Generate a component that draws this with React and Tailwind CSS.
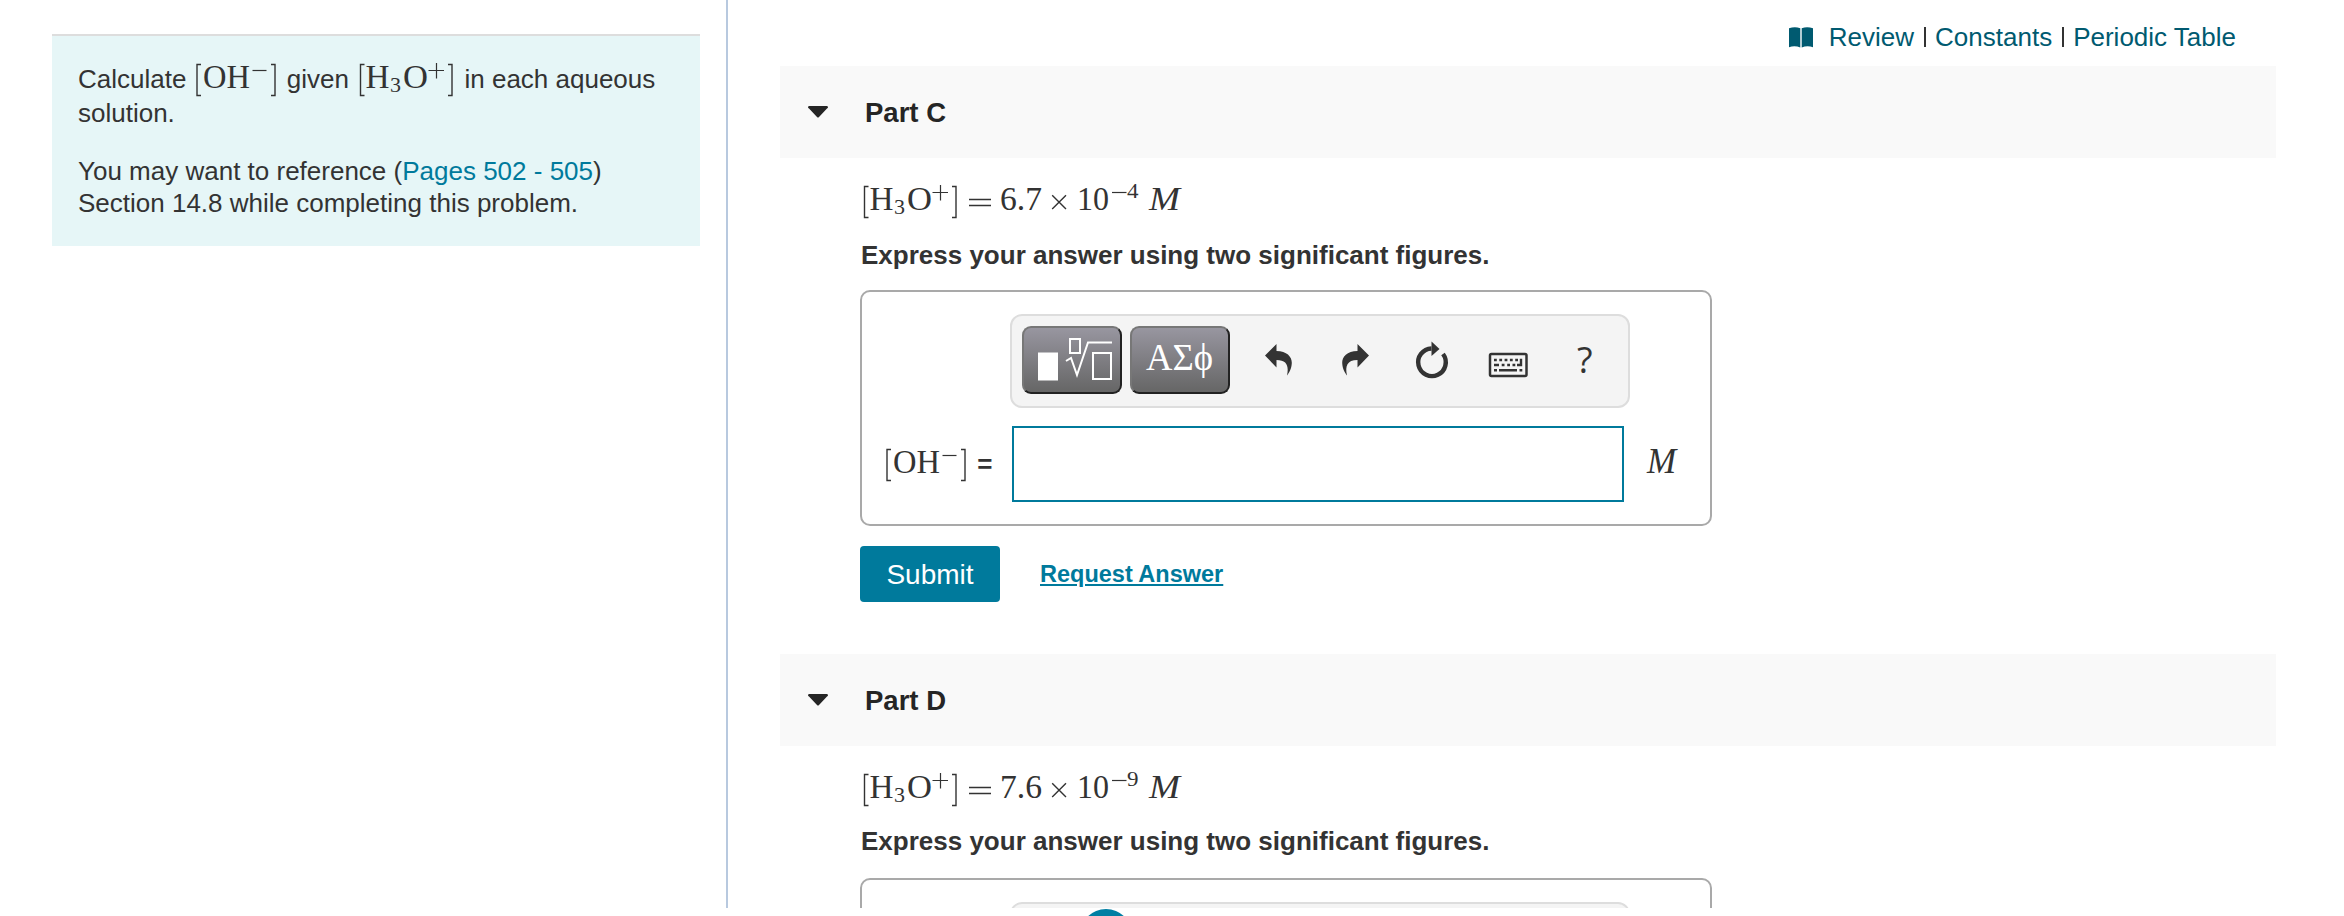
const SANS = "font-['Liberation_Sans',Arial,sans-serif]"
const MATH = "font-['Liberation_Serif','Times_New_Roman',serif]"

function Txt({ x, y, w, size, children, cls = '' }) {
  return (
    <text x={x} y={y} textLength={w} fontSize={size} lengthAdjust="spacingAndGlyphs" fill="currentColor" className={`${MATH} ${cls}`}>
      {children}
    </text>
  )
}

// [OH-]
function Hydroxide() {
  return (
    <svg className="mr-1 inline-block h-[37px] w-[82px] overflow-visible align-[-9px]" viewBox="0 0 82 37">
      <path d="M7 4.500H3V35.500H7M77 4.500h4V35.500h-4" fill="none" stroke="currentColor" strokeWidth="1.4" />
      <Txt x={9} y={28} w={47} size={34}>OH</Txt>
      <path d="M58.500 10.500h14" stroke="currentColor" strokeWidth="1.2" />
    </svg>
  )
}

// [H3O+]
function Hydronium() {
  return (
    <svg className="mx-0.5 inline-block h-[37px] w-[97px] overflow-visible align-[-9px]" viewBox="0 0 97 37">
      <path d="M6.500 4.500H2.500V35.500H6.500M90 4.500h4V35.500h-4" fill="none" stroke="currentColor" strokeWidth="1.4" />
      <Txt x={7.500} y={28} w={24} size={34}>H</Txt>
      <Txt x={32} y={31.500} w={11} size={22}>3</Txt>
      <Txt x={45} y={28} w={25} size={34}>O</Txt>
      <path d="M70.500 10.500h15.500M78.500 3v15.500" stroke="currentColor" strokeWidth="1.2" />
    </svg>
  )
}

function Equation({ value, exponent }) {
  return (
    <div className="flex h-10 items-start">
      <Hydronium />
      <svg className="-ml-0.5 h-10 w-[230px] overflow-visible" viewBox="0 0 230 40">
        <path d="M10 17.500h22M10 23.500h22M93.200 13.200l13.800 13.800M107 13.200l-13.800 13.800" stroke="currentColor" strokeWidth="1.4" />
        <Txt x={41} y={28} w={42} size={33}>{value}</Txt>
        <Txt x={118} y={28} w={32} size={33}>10</Txt>
        <path d="M153 10.500h14.500" stroke="currentColor" strokeWidth="1.2" />
        <Txt x={168} y={16} w={11.500} size={22}>{exponent}</Txt>
        <Txt x={190} y={28} w={31} size={34} cls="italic">M</Txt>
      </svg>
    </div>
  )
}

function Part({ name, value, exponent, children }) {
  return (
    <section>
      <div className="flex h-[92px] items-center bg-[#f9f9f9] pl-7">
        <svg className="mr-[37px] h-3 w-5" viewBox="0 0 20 12">
          <path d="M1 0H19Q21 1 19 2.500L11 11Q10 12 9 11L1 2.500Q-1 1 1 0Z" fill="#252525" />
        </svg>
        <h2 className="pt-px text-[27.5px] font-bold text-[#252525]">{name}</h2>
      </div>
      <div className="pl-20">
        <div className="pt-6"><Equation value={value} exponent={exponent} /></div>
        {children}
      </div>
    </section>
  )
}

function ToolButton({ children }) {
  return (
    <button className="flex h-[68px] w-[100px] items-center justify-center rounded-[9px] border-2 border-t-[#777] border-r-[#222] border-b-[#222] border-l-[#777] bg-linear-to-b from-[#9896a0] to-[#666] text-white">
      {children}
    </button>
  )
}

function Toolbar() {
  return (
    <div className="flex h-[94px] w-[620px] rounded-xl border-2 border-[#ddd] bg-[#f4f4f4] pt-2.5 pl-2.5 text-[#333]">
      <div className="flex gap-2">
        <ToolButton>
          <svg className="h-16 w-24" viewBox="0 0 96 64">
            <path d="M14 24.500h20v28H14z" fill="#fff" />
            <path d="M46 11h10v14H46zM69 25h18v26H69z" fill="none" stroke="#fff" strokeWidth="2" />
            <path d="M42 33l5-3 6 17L64 14.500H88" fill="none" stroke="#fff" strokeWidth="2" />
          </svg>
        </ToolButton>
        <ToolButton>
          <svg className="h-16 w-24 overflow-visible" viewBox="0 0 96 64"><Txt x={14} y={42} w={67} size={37}>ΑΣϕ</Txt></svg>
        </ToolButton>
      </div>
      <svg className="h-[72px] w-[380px]" viewBox="1230 326 380 72" fill="currentColor">
        <path d="M1265 355.500L1276.500 344V351C1287 351 1292 357 1291.800 363C1291.500 369 1289 373 1287 375.500C1289 366 1287 360 1276.500 360V367.500Z" />
        <path d="M1369 355.500L1357.500 344V351C1347 351 1342 357 1342.200 363C1342.500 369 1345 373 1347 375.500C1345 366 1347 360 1357.500 360V367.500Z" />
        <path d="M1443 354A13.800 13.800 0 1 1 1431.500 348.500" fill="none" stroke="currentColor" strokeWidth="4.400" />
        <path d="M1431.500 341.500L1439.500 349L1431.500 356Z" />
        <rect x="1490" y="354" width="36.500" height="22" rx="1.500" fill="none" stroke="currentColor" strokeWidth="2.500" />
        <path d="M1494 360h24" stroke="currentColor" strokeWidth="2.500" strokeDasharray="2.800 2.500" />
        <path d="M1494 365h5M1501.700 365h2.800M1507.200 365h2.800M1512.500 365h2.800M1517 365h4v-6.300M1494 370.200h3M1499 370.200h18M1519.500 370.200h2.800" fill="none" stroke="currentColor" strokeWidth="2.400" />
        <text x="1577" y="372.500" fontSize="36" className="font-['Open_Sans',sans-serif]">?</text>
      </svg>
    </div>
  )
}

export default function App() {
  return (
    <div className={`${SANS} relative flex h-[916px] w-full overflow-hidden bg-white text-[#333]`}>
      <aside className="h-[908px] w-[728px] shrink-0 border-r-2 border-[#b8c9df] pt-[34px] pl-[52px]">
        <div className="h-[212px] w-[648px] border-t-2 border-[#ddd] bg-[#e6f6f7] px-[26px] pt-6 text-[26px] leading-8">
          <p>Calculate <Hydroxide /> given <Hydronium /> in each aqueous solution.</p>
          <p className="mt-[26px]">
            You may want to reference (<a className="text-[#007a9c]">Pages 502 - 505</a>)<br />
            Section 14.8 while completing this problem.
          </p>
        </div>
      </aside>

      <main className="h-[908px] flex-1 overflow-hidden pr-[68px] pl-[52px]">
        <nav className="flex h-[66px] items-center justify-end pt-2 pr-10 text-[26px] text-[#005a70]">
          <svg className="mr-4 h-[21px] w-6" viewBox="0 0 24 24" preserveAspectRatio="none" fill="currentColor">
            <path d="M0 1.500Q6-1 11.300 1.500V23.500Q6 20.500 0 23ZM12.700 1.500Q18-1 24 1.500V23Q18 20.500 12.700 23.500Z" />
          </svg>
          <a>Review</a>
          <span className="mx-[9.5px] h-5 w-0.5 bg-[#333]" />
          <a>Constants</a>
          <span className="mx-[9.5px] h-5 w-0.5 bg-[#333]" />
          <a>Periodic Table</a>
        </nav>

        <Part name="Part C" value="6.7" exponent="4">
          <p className="h-[68px] pt-[17px] pl-px text-[26px] leading-8 font-bold">Express your answer using two significant figures.</p>
          <div className="h-[236px] w-[852px] rounded-[10px] border-2 border-[#a9a9a9] pt-[22px]">
            <div className="pl-[148px]"><Toolbar /></div>
            <div className="mt-[18px] flex h-[76px] items-center">
              <div className="w-[150px] pl-[22px] text-[26px] whitespace-nowrap"><Hydroxide /> <b>=</b></div>
              <input className="h-[76px] w-[612px] border-2 border-[#007a9c]" />
              <span className={`${MATH} mb-[3px] ml-[23px] text-[35px] italic`}>M</span>
            </div>
          </div>
          <div className="mt-5 flex items-center">
            <button className="h-14 w-[140px] rounded bg-[#007a9c] pt-px text-[28px] text-white">Submit</button>
            <a className="ml-10 pt-px text-[23.5px] font-bold text-[#007a9c] underline">Request Answer</a>
          </div>
          <div className="h-[52px]" />
        </Part>

        <Part name="Part D" value="7.6" exponent="9">
          <p className="h-[68px] pt-[15px] pl-px text-[26px] leading-8 font-bold">Express your answer using two significant figures.</p>
          <div className="h-[236px] w-[852px] rounded-[10px] border-2 border-[#a9a9a9] pt-[22px] pl-[148px]">
            <Toolbar />
          </div>
        </Part>
      </main>

      {/* floating button peeking over the bottom edge */}
      <div className="absolute top-[909px] left-[1080px] h-[52px] w-[52px] rounded-full bg-[#007fa3]" />
    </div>
  )
}
